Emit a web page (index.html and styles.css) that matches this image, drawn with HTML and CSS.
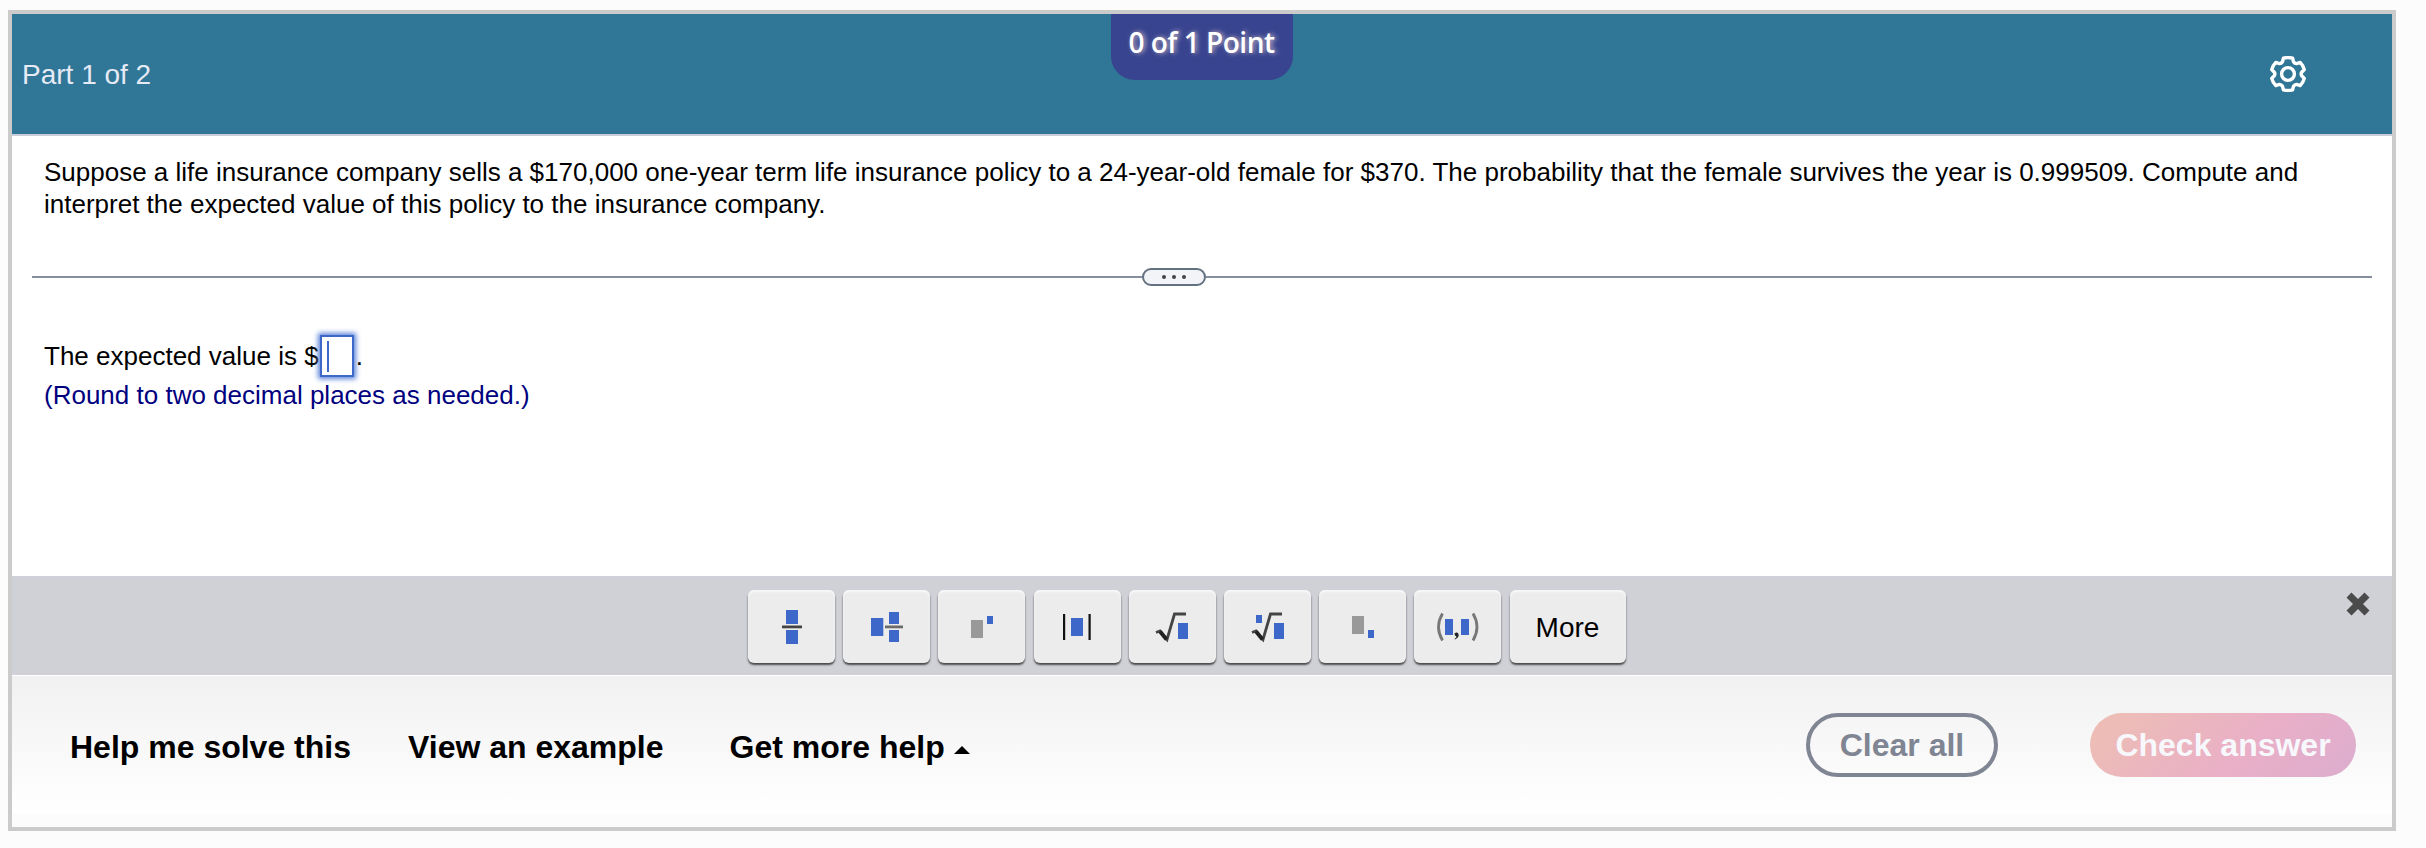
FILE: index.html
```html
<!DOCTYPE html>
<html lang="en">
<head>
    <meta charset="UTF-8">
    <meta name="viewport" content="width=device-width, initial-scale=1.0">
    <title>Expected value</title>
    <link rel="stylesheet" href="styles.css">
</head>
<body>
    <div class="player">
        <header class="header">
            <span class="part">Part 1 of 2</span>
            <div class="points">0 of 1 Point</div>
            <svg class="gear" viewBox="-18 -18 36 36" fill="none" stroke="#fff" stroke-width="3.4" stroke-linejoin="round">
                <path d="M-4.6 -15.8Q0 -17.2 4.6 -15.8L5.5 -12.2Q6.8 -10.2 9 -10.5L12.2 -11.6Q15.2 -8.6 16.3 -4.4L13.7 -1.8Q12.6 0 13.7 1.8L16.3 4.4Q15.2 8.6 12.2 11.6L9 10.5Q6.8 10.2 5.5 12.2L4.6 15.8Q0 17.2 -4.6 15.8L-5.5 12.2Q-6.8 10.2 -9 10.5L-12.2 11.6Q-15.2 8.6 -16.3 4.4L-13.7 1.8Q-12.6 0 -13.7 -1.8L-16.3 -4.4Q-15.2 -8.6 -12.2 -11.6L-9 -10.5Q-6.8 -10.2 -5.5 -12.2Z"/>
                <circle r="6.4"/>
            </svg>
        </header>

        <main class="content">
            <p class="question">Suppose a life insurance company sells a $170,000 one-year term life insurance policy to a 24-year-old female for $370. The probability that the female survives the year is 0.999509. Compute and<br>interpret the expected value of this policy to the insurance company.</p>

            <div class="divider">
                <span class="line line-left"></span>
                <span class="pill"><i></i><i></i><i></i></span>
                <span class="line"></span>
            </div>

            <div class="answer">
                <span>The expected value is $</span><span class="answer-box"><span class="caret"></span></span><span>.</span>
            </div>
            <p class="hint">(Round to two decimal places as needed.)</p>
        </main>

        <!-- Math palette -->
        <div class="palette">
            <div class="key">
                <svg viewBox="0 0 87 73"><path class="blue" d="M38 20h12v14H38zM38 40h12v14H38z"/><path fill="#444" d="M34 35.5h20v2.8H34z"/></svg>
            </div>
            <div class="key">
                <svg viewBox="0 0 87 73"><path class="blue" d="M28 28h12.3v18H28zM46 22h10v12H46zM46 40h10v12H46z"/><path fill="#6b6b6b" d="M42 35.5h18v2.8H42z"/></svg>
            </div>
            <div class="key">
                <svg viewBox="0 0 87 73"><path class="grey" d="M33 30h12v18H33z"/><path class="blue" d="M49 26h6v8h-6z"/></svg>
            </div>
            <div class="key">
                <svg viewBox="0 0 87 73"><path fill="#111" d="M29 24h2.2v26H29zM54.5 24h2.2v26h-2.2z"/><path class="blue" d="M37 28h12v18H37z"/></svg>
            </div>
            <div class="key">
                <svg viewBox="0 0 87 73"><path class="root" d="M27 42.5l4-1.5 7 8.5 7.5-25.5H57"/><path class="thick" d="M31 41.5l6.5 8"/><path class="blue" d="M49 33h10v16H49z"/></svg>
            </div>
            <div class="key">
                <svg viewBox="0 0 87 73"><path class="root" d="M28 42.5l4-1.5 7 8.5 7.5-25.5H58"/><path class="thick" d="M32 41.5l6.5 8"/><path class="blue" d="M50 33h10v16H50zM32 25h6v8h-6z"/></svg>
            </div>
            <div class="key">
                <svg viewBox="0 0 87 73"><path class="grey" d="M33 26h12v18H33z"/><path class="blue" d="M49 40h6v8h-6z"/></svg>
            </div>
            <div class="key">
                <svg viewBox="0 0 87 73"><path class="paren" d="M28.5 23.5Q20.5 37 28.5 50.5M59 23.5Q67 37 59 50.5"/><path class="blue" d="M31 29h8v16h-8zM47 29h8v16h-8z"/><path fill="#222" d="M40.5 43.5q2.5-2 4 .5 1 3-3.5 5.5l-.5-.5q2.5-1.5 1.8-2.7-1.8-.3-1.8-2.8z"/></svg>
            </div>
            <div class="key key-more">More</div>
            <svg class="close" viewBox="0 0 24 24"><path d="M5.5 .5L12 7l6.5-6.5 5 5L17 12l6.5 6.5-5 5L12 17l-6.5 6.5-5-5L7 12 .5 5.5z"/></svg>
        </div>

        <footer class="footer">
            <a class="help">Help me solve this</a>
            <a class="help">View an example</a>
            <a class="help">Get more help <span class="arrow"></span></a>
            <div class="actions">
                <button type="button" class="btn btn-clear">Clear all</button>
                <button type="button" class="btn btn-check">Check answer</button>
            </div>
        </footer>
    </div>
</body>
</html>
```
FILE: styles.css
```css
* {
    box-sizing: border-box;
}
body {
    margin: 0;
    padding: 10px 0 0 8px;
    background-color: #fcfcfc;
    font-family: "Liberation Sans", Arial, Helvetica, sans-serif;
    color: #000;
}
.player {
    width: 2388px;
    height: 821px;
    border: 4px solid #cbcbcb;
    display: flex;
    flex-direction: column;
}
.header {
    height: 122px;
    background-color: #307697;
    border-bottom: 2px solid #c9ced8;
    display: grid;
    grid-template-columns: 1fr 182px 1fr;
    align-items: center;
    padding: 0 86px 0 9px;
}
.part {
    padding: 1px 0 0 1px;
    font-size: 28px;
    line-height: 32px;
    color: #e5eaf5;
}
.points {
    align-self: start;
    height: 66px;
    margin-left: 38px;
    margin-right: -38px;
    border-radius: 0 0 24px 24px;
    background-color: #38448f;
    color: #fff;
    font-family: "Open Sans", "Noto Sans", sans-serif;
    font-size: 28px;
    font-weight: 600;
    letter-spacing: -0.5px;
    line-height: 56px;
    text-align: center;
    white-space: nowrap;
    text-shadow: 2px 0 5px rgba(255, 225, 215, 0.7);
}
.gear {
    justify-self: end;
    width: 36px;
    height: 36px;
}
.content {
    height: 440px;
    background-color: #fff;
    padding: 20px 20px 0;
    font-size: 26px;
}
.question {
    margin: 0;
    padding-left: 12px;
    line-height: 32px;
    white-space: nowrap;
}
.divider {
    display: flex;
    align-items: center;
    height: 18px;
    margin-top: 48px;
}
.line {
    flex: 1;
    height: 2px;
    background-color: #868d9d;
}
.line-left {
    flex: 0 0 1110px;
}
.pill {
    display: flex;
    align-items: center;
    justify-content: center;
    gap: 6px;
    width: 64px;
    height: 18px;
    border: 2px solid #637180;
    border-radius: 9px;
    background-color: #f3f4f7;
}
.pill i {
    width: 4px;
    height: 4px;
    border-radius: 50%;
    background-color: #444;
}
.answer {
    display: flex;
    align-items: center;
    height: 42px;
    margin: 49px 0 0 12px;
}
.answer-box {
    width: 34px;
    height: 42px;
    margin: 0 2px 0 1px;
    padding: 4px 0 0 5px;
    border: 2px solid #3d67c8;
    background-color: #fff;
    box-shadow: 0 0 5px 2px #5d83d8;
}
.caret {
    display: block;
    width: 2px;
    height: 31px;
    background-color: #3d67c8;
}
.hint {
    margin: 2px 0 0 12px;
    line-height: 32px;
    color: #00007f;
}
/* Palette */
.palette {
    position: relative;
    display: flex;
    align-items: flex-start;
    gap: 8.2px;
    height: 99px;
    padding: 13px 0 0 736px;
    background-color: #d0d1d7;
    border-top: 1px solid #ccd1dc;
}
.key {
    width: 87px;
    height: 73px;
    border-radius: 6px;
    background-color: #ececec;
    box-shadow: inset 0 2px 2px #f8f8f8, 0 2px 2px rgba(0, 0, 0, 0.65);
}
.key svg {
    display: block;
    width: 87px;
    height: 73px;
}
.key-more {
    width: 116px;
    font-size: 28px;
    line-height: 75px;
    text-align: center;
}
.blue {
    fill: #3d67c8;
}
.grey {
    fill: #999;
}
.root {
    fill: none;
    stroke: #444;
    stroke-width: 2.8;
}
.thick {
    stroke: #222;
    stroke-width: 3.8;
}
.paren {
    fill: none;
    stroke: #777;
    stroke-width: 2.8;
}
.close {
    position: absolute;
    top: 15px;
    right: 22px;
    width: 24px;
    height: 24px;
    fill: #4b4b4b;
}
.footer {
    display: flex;
    align-items: center;
    height: 139px;
    padding: 0 36px 0 58px;
    border-top: 1px solid #fff;
    background: linear-gradient(#f1f1f1, #fff);
}
.help {
    padding-top: 3px;
    margin-right: 57px;
    font-size: 32px;
    font-weight: bold;
    line-height: 40px;
    white-space: nowrap;
}
.help + .help + .help {
    margin-left: 9px;
}
.arrow {
    display: inline-block;
    vertical-align: 4px;
    border: 8px solid transparent;
    border-top: 0;
    border-bottom-color: #000;
}
.actions {
    display: flex;
    gap: 92px;
    margin-left: auto;
}
.btn {
    height: 64px;
    padding: 1px 0 0;
    border: none;
    border-radius: 32px;
    font-family: inherit;
    font-size: 32px;
    font-weight: bold;
    white-space: nowrap;
}
.btn-clear {
    width: 192px;
    border: 4px solid #808593;
    background-color: transparent;
    color: #808593;
}
.btn-check {
    width: 266px;
    background: linear-gradient(135deg, #eebfb3, #e9afc7 60%, #dcadcf);
    color: #f7f8fc;
}
```
